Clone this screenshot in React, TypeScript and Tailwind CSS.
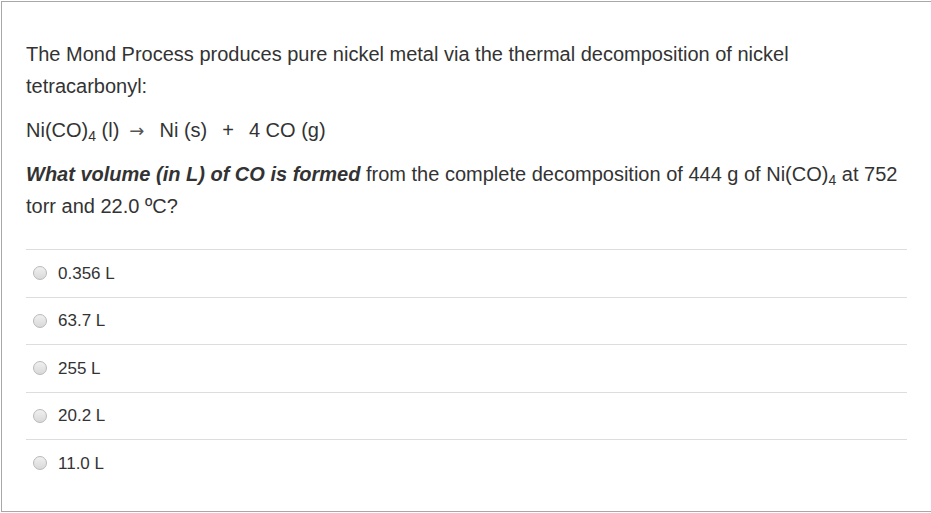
const options = ['0.356 L', '63.7 L', '255 L', '20.2 L', '11.0 L'];

function Radio() {
  return (
    <span className="block w-[14px] h-[14px] shrink-0 rounded-full border border-[#b9b9b9] bg-gradient-to-b from-[#f0f0f0] to-[#d9d9d9]" />
  );
}

function Sub({ children }: { children: React.ReactNode }) {
  return <span className="text-[14px] leading-none align-[-4px]">{children}</span>;
}

export default function App() {
  return (
    <div className="w-[931px] h-[513px] bg-white pt-px pl-px overflow-hidden font-['Liberation_Sans',Arial,sans-serif] text-[#333333]">
      <div className="h-[511px] border-l border-t border-b border-[#a8a8a8] px-6 pt-9">
        <div className="flex flex-col gap-3 text-[20px] leading-[32px]">
          <p>
            The Mond Process produces pure nickel metal via the thermal decomposition of nickel tetracarbonyl:
          </p>
          <p>
            Ni(CO)<Sub>4</Sub> (l)
            <span className="font-['DejaVu_Sans',sans-serif] text-[18px] leading-none text-[#555] ml-[10px] mr-[15px]">→</span>
            Ni (s)
            <span className="mx-[15px]">+</span>
            4 CO (g)
          </p>
          <p>
            <b className="italic font-bold">What volume (in L) of CO is formed</b> from the complete decomposition of 444 g of
            Ni(CO)<Sub>4</Sub> at 752 torr and 22.0 ºC?
          </p>
        </div>
        <div className="mt-[27px] flex flex-col">
          {options.map(o => (
            <div key={o} className="h-[47.5px] border-t border-[#dddddd] flex items-center pl-[7px] gap-[11px]">
              <Radio />
              <span className="text-[17px]">{o}</span>
            </div>
          ))}
        </div>
      </div>
    </div>
  );
}
